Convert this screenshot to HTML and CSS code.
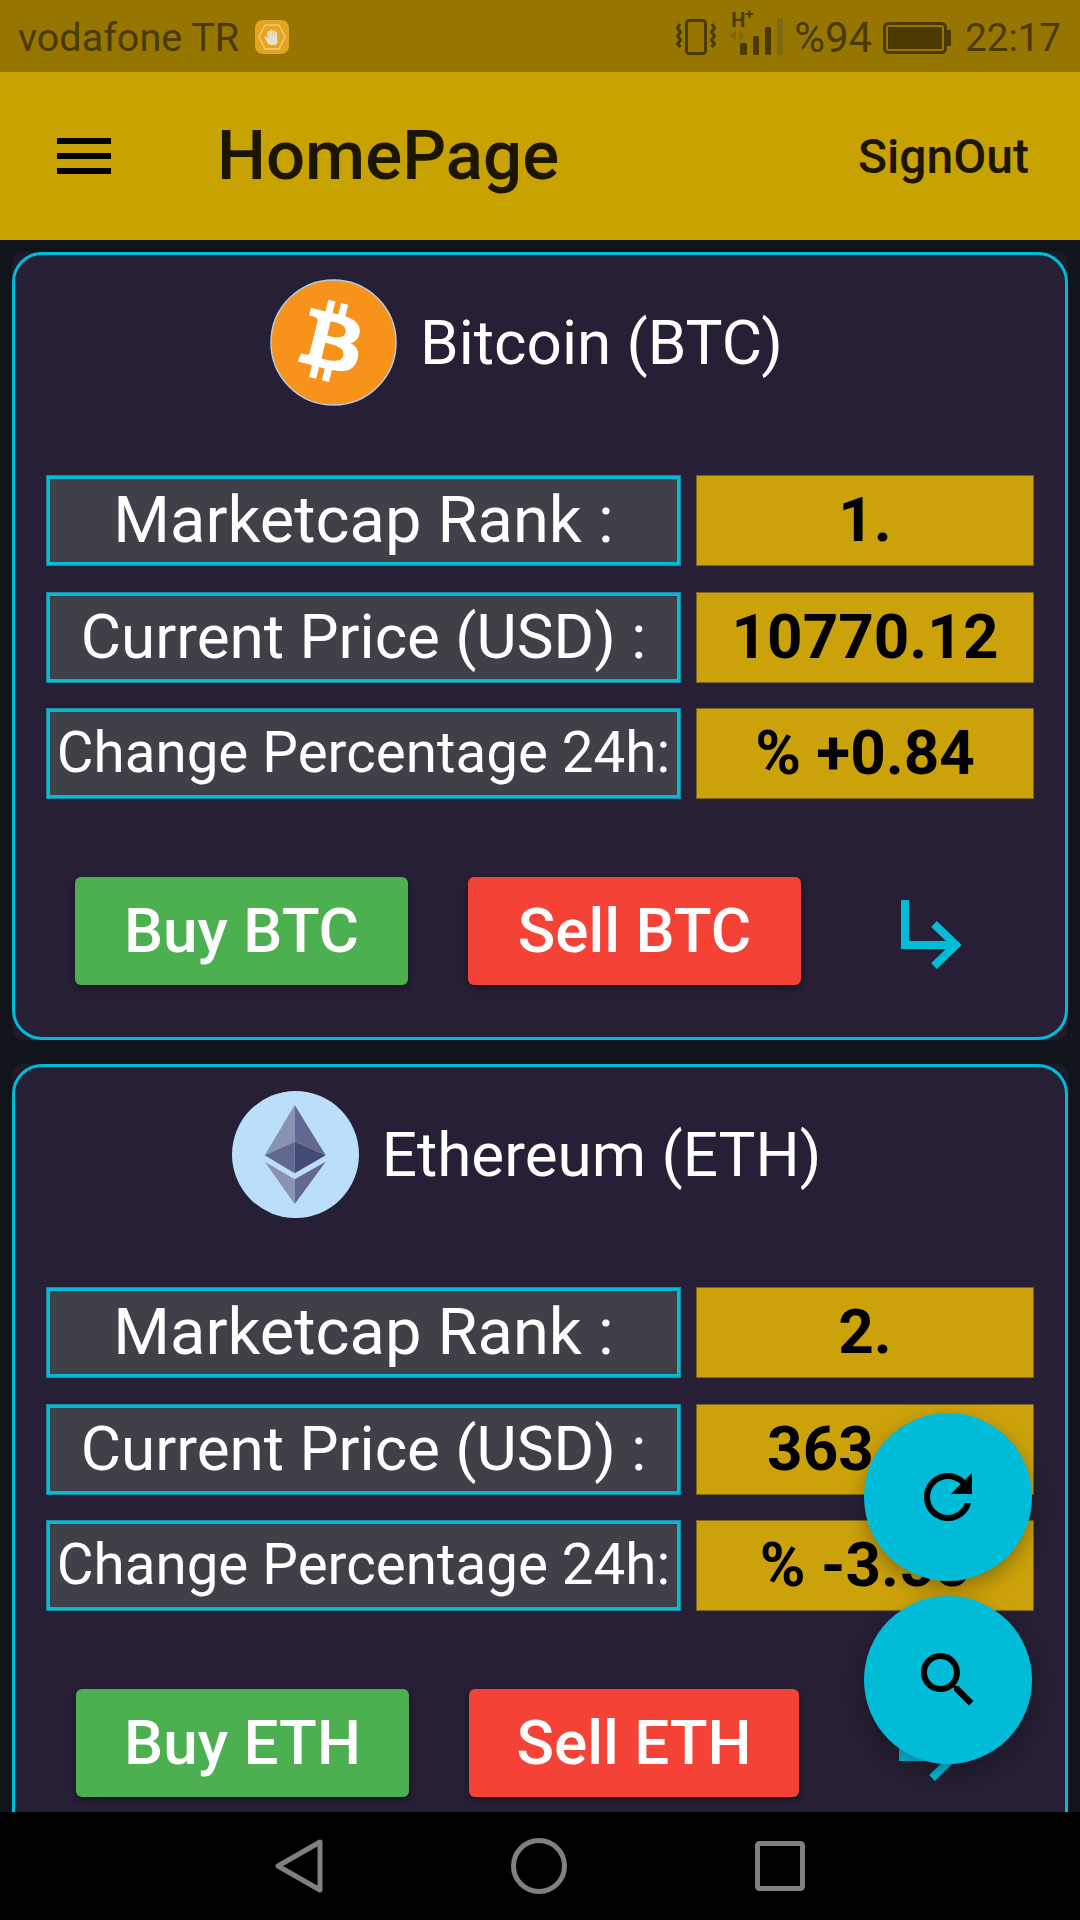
FILE: index.html
```html
<!DOCTYPE html>
<html lang="en">
<head>
  <meta charset="UTF-8" />
  <meta name="viewport" content="width=device-width, initial-scale=1.0"/>
  <title>HomePage</title>
  <link rel="stylesheet" href="styles.css">
</head>
<body>
  <div class="phone">
    <div class="status-bar">
      <span class="carrier">vodafone TR</span>
      <span class="adblock">
        <svg width="34" height="34" viewBox="0 0 34 34">
          <path d="M10 5h14l6 12-6 12H10L4 17z" fill="none" stroke="#f0dfa8" stroke-width="1"/>
          <path d="M13.500 18v-6M16 18v-7.500M18.500 18v-7M21 18v-5.500M10.500 17.500l3 4.500" fill="none" stroke="#e6e0c8" stroke-width="2.200" stroke-linecap="round"/>
          <rect x="12.500" y="16" width="10" height="9" rx="3.500" fill="#e6e0c8"/>
        </svg>
      </span>
      <span class="status-right">
        <svg class="ic-vibrate" width="40" height="36" viewBox="0 0 40 36">
          <rect x="10.500" y="1.500" width="19" height="33" rx="3" fill="none" stroke="#4a3a00" stroke-width="3"/>
          <path d="M4 5L1.500 9l3 4-3 4 3 4-3 4 3 3M36 5l2.500 4-3 4 3 4-3 4 3 4-3 3" fill="none" stroke="#4a3a00" stroke-width="3"/>
        </svg>
        <span class="signal">
          <span class="net-type">H<sup>+</sup></span>
          <svg width="55" height="42" viewBox="0 0 55 42">
            <path d="M7 17l-6 5.500L7 28zM10 17v11l6-5.500z" fill="#7d6a10"/>
            <rect x="11" y="30" width="7" height="12" rx="1.500" fill="#4a3a00"/>
            <rect x="24" y="23" width="6" height="19" rx="1.500" fill="#4a3a00"/>
            <rect x="36" y="14" width="6" height="28" rx="1.500" fill="#4a3a00"/>
            <rect x="48" y="5" width="6" height="37" rx="1.500" fill="#7d6a10"/>
          </svg>
        </span>
        <span class="battery-text">%94</span>
        <svg class="ic-battery" width="68" height="32" viewBox="0 0 68 32">
          <rect x="1.500" y="1.500" width="61" height="29" rx="4" fill="none" stroke="#4a3a00" stroke-width="3"/>
          <rect x="5" y="5" width="54" height="22" fill="#4a3a00"/>
          <rect x="64" y="8" width="4" height="16" fill="#4a3a00"/>
        </svg>
        <span class="clock">22:17</span>
      </span>
    </div>

    <header class="app-bar">
      <svg class="menu-icon" width="72" height="72" viewBox="0 0 24 24"><path d="M3 18h18v-2H3v2zm0-5h18v-2H3v2zm0-7v2h18V6H3z"/></svg>
      <h1>HomePage</h1>
      <span class="sign-out">SignOut</span>
    </header>

    <main class="coin-list">
      <section class="card">
        <div class="card-inner">
          <div class="coin-head">
            <svg class="coin-logo" width="127" height="127" viewBox="0 0 127 127">
              <circle cx="63.500" cy="63.500" r="62.500" fill="#f7931a" stroke="#b4cde0" stroke-width="1.500"/>
              <g transform="translate(61 63) scale(2.030) translate(-32 -32)">
                <path fill="#fff" d="M46.103,27.444c0.637-4.258-2.605-6.547-7.038-8.074l1.438-5.768l-3.511-0.875l-1.4,5.616c-0.923-0.23-1.871-0.447-2.813-0.662l1.41-5.653l-3.509-0.875l-1.439,5.766c-0.764-0.174-1.514-0.346-2.242-0.527l0.004-0.018l-4.842-1.209l-0.934,3.75c0,0,2.605,0.597,2.55,0.634c1.422,0.355,1.679,1.296,1.636,2.042l-1.638,6.571c0.098,0.025,0.225,0.061,0.365,0.117c-0.117-0.029-0.242-0.061-0.371-0.092l-2.296,9.205c-0.174,0.432-0.615,1.08-1.609,0.834c0.035,0.051-2.552-0.637-2.552-0.637l-1.743,4.019l4.569,1.139c0.85,0.213,1.683,0.436,2.503,0.646l-1.453,5.834l3.507,0.875l1.439-5.772c0.958,0.26,1.888,0.5,2.798,0.726l-1.434,5.745l3.511,0.875l1.453-5.823c5.987,1.133,10.489,0.676,12.384-4.739c1.527-4.36-0.076-6.875-3.226-8.515c2.294-0.529,4.022-2.038,4.483-5.155z M38.081,38.693c-1.085,4.36-8.426,2.003-10.806,1.412l1.928-7.729C31.583,32.97,39.215,34.147,38.081,38.693z M39.167,27.381c-0.99,3.966-7.1,1.951-9.082,1.457l1.748-7.01C33.815,22.322,40.199,23.244,39.167,27.381z"/>
              </g>
            </svg>
            <span class="coin-name">Bitcoin (BTC)</span>
          </div>
          <div class="stats">
            <div class="stat-label rank">Marketcap Rank :</div>
            <div class="stat-value">1.</div>
            <div class="stat-label price">Current Price (USD) :</div>
            <div class="stat-value">10770.12</div>
            <div class="stat-label change">Change Percentage 24h:</div>
            <div class="stat-value">% +0.84</div>
          </div>
          <div class="actions">
            <button class="btn btn-buy">Buy BTC</button>
            <button class="btn btn-sell">Sell BTC</button>
            <svg class="go-icon" width="60" height="70" viewBox="0 0 60 70"><path d="M4 0v45h50M33 24l22 21-22 21" fill="none" stroke="#00bcd8" stroke-width="8"/></svg>
          </div>
        </div>
      </section>

      <section class="card">
        <div class="card-inner">
          <div class="coin-head">
            <svg class="coin-logo" width="127" height="127" viewBox="0 0 127 127">
              <circle cx="63.500" cy="63.500" r="63.500" fill="#bbdefb"/>
              <path d="M62.700 14L32.700 64.300 62.700 50.700z" fill="#8a92b2"/>
              <path d="M62.700 14L93.700 64.300 62.700 50.700z" fill="#62688f"/>
              <path d="M32.700 64.300L62.700 82.300V50.700z" fill="#62688f"/>
              <path d="M93.700 64.300L62.700 82.300V50.700z" fill="#454a75"/>
              <path d="M32.700 70.700L62.700 113V88.300z" fill="#8a92b2"/>
              <path d="M93.700 70.700L62.700 113V88.300z" fill="#62688f"/>
            </svg>
            <span class="coin-name">Ethereum (ETH)</span>
          </div>
          <div class="stats">
            <div class="stat-label rank">Marketcap Rank :</div>
            <div class="stat-value">2.</div>
            <div class="stat-label price">Current Price (USD) :</div>
            <div class="stat-value">363.87</div>
            <div class="stat-label change">Change Percentage 24h:</div>
            <div class="stat-value">% -3.55</div>
          </div>
          <div class="actions actions-eth">
            <button class="btn btn-buy">Buy ETH</button>
            <button class="btn btn-sell">Sell ETH</button>
            <svg class="go-icon" width="60" height="70" viewBox="0 0 60 70"><path d="M4 0v45h50M33 24l22 21-22 21" fill="none" stroke="#00bcd8" stroke-width="8"/></svg>
          </div>
        </div>
      </section>
    </main>

    <div class="fabs">
      <button class="fab">
        <svg width="72" height="72" viewBox="0 0 24 24"><path d="M17.650 6.350C16.200 4.900 14.210 4 12 4c-4.420 0-7.990 3.580-7.990 8s3.570 8 7.990 8c3.730 0 6.840-2.550 7.730-6h-2.080c-.82 2.330-3.040 4-5.650 4-3.310 0-6-2.690-6-6s2.690-6 6-6c1.660 0 3.140.69 4.220 1.780L13 11h7V4l-2.350 2.350z"/></svg>
      </button>
      <button class="fab">
        <svg width="72" height="72" viewBox="0 0 24 24"><path d="M15.500 14h-.79l-.28-.27C15.410 12.590 16 11.110 16 9.500 16 5.910 13.090 3 9.500 3S3 5.910 3 9.500 5.910 16 9.500 16c1.610 0 3.090-.59 4.230-1.570l.27.28v.79l5 4.990L20.490 19l-4.990-5zm-6 0C7.010 14 5 11.990 5 9.500S7.010 5 9.500 5 14 7.010 14 9.500 11.990 14 9.500 14z"/></svg>
      </button>
    </div>

    <nav class="nav-bar">
      <svg width="48" height="54" viewBox="0 0 48 54"><path d="M45 3L3 27l42 24z" fill="none" stroke="#808080" stroke-width="5" stroke-linejoin="round"/></svg>
      <svg width="56" height="56" viewBox="0 0 56 56"><circle cx="28" cy="28" r="25.500" fill="none" stroke="#808080" stroke-width="5"/></svg>
      <svg width="50" height="50" viewBox="0 0 50 50"><rect x="2.500" y="2.500" width="45" height="45" rx="2" fill="none" stroke="#808080" stroke-width="5"/></svg>
    </nav>
  </div>
</body>
</html>
```

FILE: styles.css
```css
* {
  box-sizing: border-box;
}

body {
  margin: 0;
  font-family: Roboto, sans-serif;
  background-color: #000;
}

.phone {
  position: relative;
  width: 1080px;
  height: 1920px;
  display: flex;
  flex-direction: column;
  overflow: hidden;
}

/* status bar */
.status-bar {
  height: 72px;
  flex-shrink: 0;
  display: flex;
  align-items: center;
  padding: 2px 19px 0 18px;
  background: #967600;
  color: #4a3a00;
  font-size: 39.500px;
}

.adblock {
  width: 34px;
  height: 34px;
  margin-left: 16px;
  border-radius: 8px;
  background: #e6a520;
}

.adblock svg {
  display: block;
}

.status-right {
  margin-left: auto;
  display: flex;
  align-items: center;
}

.signal {
  position: relative;
  width: 55px;
  height: 42px;
  margin: -6px 10px 0 13px;
}

.signal svg {
  display: block;
}

.net-type {
  position: absolute;
  left: 2px;
  top: -3px;
  font-size: 20px;
  font-weight: 700;
  line-height: 20px;
}

.net-type sup {
  font-size: 15px;
  line-height: 0;
}

.battery-text {
  font-size: 42px;
}

.ic-battery {
  margin: 1px 14px 0 11px;
}

.clock {
  font-size: 38.500px;
}

/* app bar */
.app-bar {
  height: 168px;
  flex-shrink: 0;
  display: flex;
  align-items: center;
  padding: 0 51px 0 48px;
  background: #c8a200;
  color: #1c1500;
}

.menu-icon {
  flex-shrink: 0;
}

.app-bar h1 {
  margin: 0 0 2px 97px;
  font-size: 69px;
  font-weight: 500;
}

.sign-out {
  margin-left: auto;
  font-size: 48px;
  font-weight: 500;
}

/* coin cards */
.coin-list {
  flex: 1;
  min-height: 0;
  overflow: hidden;
  padding: 12px 12px 0;
  background: #10141b;
  display: flex;
  flex-direction: column;
  gap: 24px;
}

.card {
  flex-shrink: 0;
  background: #1e1a2a;
  border-radius: 10px;
}

.card-inner {
  height: 788px;
  padding: 24px 31px 0;
  border: 3px solid #00bcd8;
  border-radius: 30px;
  background: #261f35;
}

.coin-head {
  display: flex;
  align-items: center;
  justify-content: center;
  gap: 23px;
  padding-right: 27px;
}

.coin-logo {
  flex-shrink: 0;
  display: block;
}

.coin-name {
  font-size: 62px;
  color: #fff;
}

.stats {
  display: grid;
  grid-template-columns: 635px 338px;
  grid-auto-rows: 91px;
  column-gap: 15px;
  row-gap: 25.500px;
  margin-top: 69px;
}

.stat-label,
.stat-value {
  display: flex;
  align-items: center;
  justify-content: center;
  padding-bottom: 2px;
  white-space: nowrap;
}

.stat-label {
  border: 1px solid #1b8aa0;
  box-shadow: inset 0 0 0 3px #00bcd8;
  background: #404148;
  color: #fff;
}

.rank {
  font-size: 65px;
}

.price {
  font-size: 62px;
}

.change {
  font-size: 56.500px;
}

.stat-value {
  border: 1px solid #7b6420;
  background: #cca20a;
  color: #000;
  font-size: 62px;
  font-weight: 700;
}

.actions {
  display: flex;
  align-items: flex-start;
  margin: 78px 0 0 29px;
}

.btn {
  width: 333px;
  height: 108px;
  padding: 0 0 2px;
  border: none;
  border-radius: 6px;
  color: #fff;
  font-family: inherit;
  font-size: 62px;
  font-weight: 500;
  box-shadow: 0 3px 6px rgba(0,0,0,0.3);
}

.btn-buy {
  background: #4caf50;
}

.btn-sell {
  background: #f44336;
  margin-left: 60px;
}

.go-icon {
  margin: 23px 0 0 100px;
  flex-shrink: 0;
}

.actions-eth {
  margin-left: 30px;
}

.actions-eth .btn-sell {
  width: 330px;
}

/* floating buttons */
.fabs {
  position: absolute;
  left: 864px;
  top: 1413px;
  display: flex;
  flex-direction: column;
  gap: 15px;
}

.fab {
  width: 168px;
  height: 168px;
  padding: 0;
  border: none;
  border-radius: 50%;
  background: #00bcd8;
  display: flex;
  align-items: center;
  justify-content: center;
  box-shadow: 0 8px 20px rgba(0,0,0,0.3);
}

/* android nav */
.nav-bar {
  position: relative;
  height: 108px;
  flex-shrink: 0;
  display: flex;
  align-items: center;
  justify-content: center;
  gap: 188px;
  background: #000;
}
```
